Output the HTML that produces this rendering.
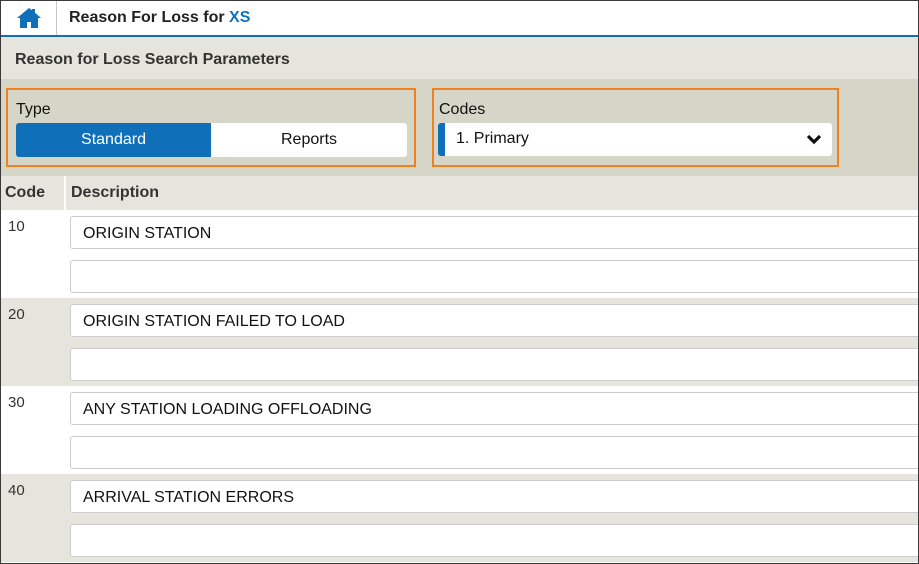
<!DOCTYPE html>
<html><head><style>
*{box-sizing:border-box;margin:0;padding:0}
body{width:919px;height:564px;overflow:hidden;font-family:"Liberation Sans",Arial,sans-serif;background:#fff;position:relative}
.frame{position:absolute;left:0;top:0;width:919px;height:564px;border:1px solid #3a3a3a;z-index:10}
.hdr{position:absolute;left:0;top:0;width:919px;height:37px;background:#fff;border-bottom:2px solid #0f6fb8}
.home{position:absolute;left:0;top:0;width:57px;height:35px;border-right:1px solid #c8c8c8}
.title{position:absolute;left:69px;top:9px;font-size:16px;font-weight:bold;color:#222}
.title span{color:#0f72bd}
.sec{position:absolute;left:0;top:37px;width:919px;height:42px;background:#e5e5dd;font-weight:bold;font-size:16px;color:#333;padding:14px 0 0 15px}
.par{position:absolute;left:0;top:79px;width:919px;height:97px;background:#d5d5c8}
.box{position:absolute;top:9px;height:79px;border:2px solid #f08020}
.lbl{position:absolute;left:8px;top:11px;font-size:16px;color:#111}
.seg{position:absolute;left:8px;top:33px;height:34px;border-radius:3px;font-size:16px;text-align:center;line-height:34px}
.sel{position:absolute;left:4px;top:33px;width:394px;height:33px;background:#fff;border-radius:3px;border-left:7px solid #0f6fb8;font-size:16px;padding:7px 0 0 11px;color:#111}
.th{position:absolute;left:0;top:176px;width:919px;height:34px;background:#e5e5dd;font-weight:bold;font-size:16px;color:#333}
.row{position:absolute;left:0;width:919px;height:88px}
.code{position:absolute;left:8px;top:8px;font-size:15px;color:#333}
.in{position:absolute;left:70px;width:860px;height:33px;background:#fff;border:1px solid #ccc;border-radius:3px;font-size:16px;padding:8px 0 0 12px;color:#111}
</style></head><body>
<div class="hdr">
<div class="home"><svg style="position:absolute;left:16px;top:7px" width="26" height="21" viewBox="0 0 26 21"><path d="M13 1L1 11h3v10h7v-6h4v6h7V11h3L19 5.8V2h-3v1.3z" fill="#0f6fb8"/></svg></div>
<div class="title">Reason For Loss for <span>XS</span></div>
</div>
<div class="sec">Reason for Loss Search Parameters</div>
<div class="par">
<div class="box" style="left:6px;width:410px">
<div class="lbl">Type</div>
<div class="seg" style="width:195px;background:#0f6fb8;color:#fff;border-radius:3px 0 0 3px">Standard</div>
<div class="seg" style="left:203px;width:196px;background:#fff;color:#111;border-radius:0 3px 3px 0">Reports</div>
</div>
<div class="box" style="left:432px;width:407px">
<div class="lbl" style="left:5px">Codes</div>
<div class="sel">1. Primary<svg style="position:absolute;right:10px;top:11px" width="16" height="11" viewBox="0 0 16 11"><path d="M2 2l6 6 6-6" stroke="#111" stroke-width="3.2" fill="none"/></svg></div>
</div>
</div>
<div class="th"><span style="position:absolute;left:5px;top:8px">Code</span><div style="position:absolute;left:64px;top:0;width:2px;height:34px;background:#fff"></div><span style="position:absolute;left:71px;top:8px">Description</span></div>
<div class="row" style="top:210px;background:#fff"><div class="code">10</div><div class="in" style="top:6px">ORIGIN STATION</div><div class="in" style="top:50px"></div></div>
<div class="row" style="top:298px;background:#e5e5dd"><div class="code">20</div><div class="in" style="top:6px">ORIGIN STATION FAILED TO LOAD</div><div class="in" style="top:50px"></div></div>
<div class="row" style="top:386px;background:#fff"><div class="code">30</div><div class="in" style="top:6px">ANY STATION LOADING OFFLOADING</div><div class="in" style="top:50px"></div></div>
<div class="row" style="top:474px;background:#e5e5dd"><div class="code">40</div><div class="in" style="top:6px">ARRIVAL STATION ERRORS</div><div class="in" style="top:50px"></div></div>
<div class="frame"></div>
</body></html>
